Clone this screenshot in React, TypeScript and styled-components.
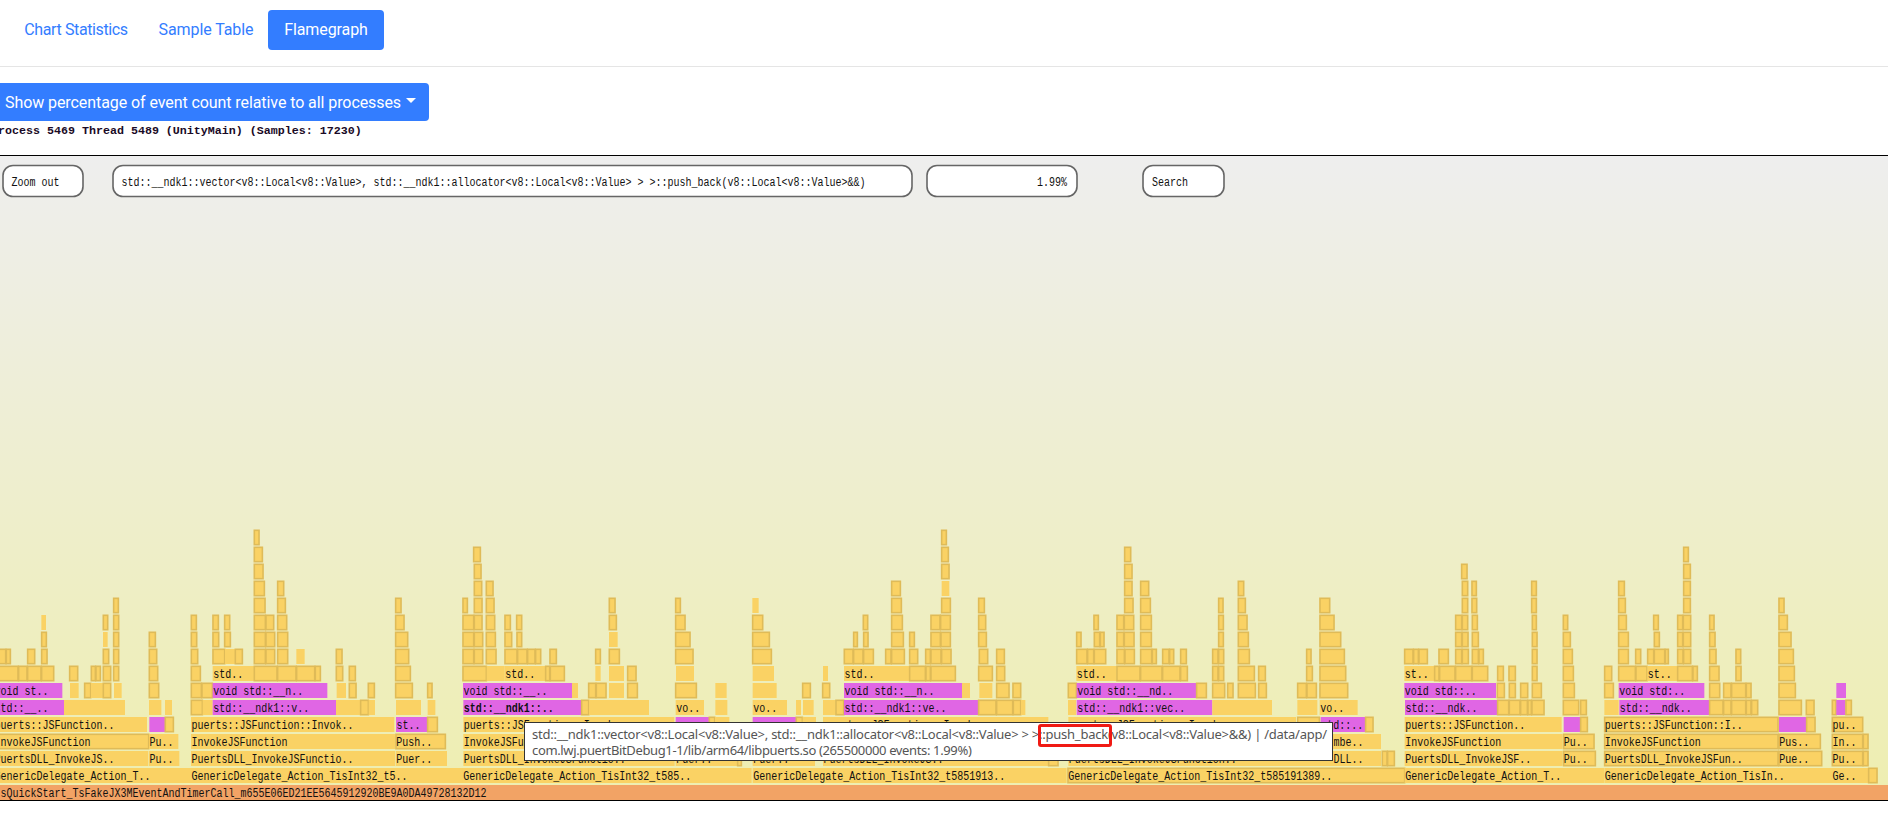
import React from "react";
import styled, { createGlobalStyle } from "styled-components";

const Global = createGlobalStyle`
  html, body { margin: 0; padding: 0; background: #fff; overflow: hidden; height: 815px; }
  body { font-family: "Roboto", "Noto Sans", sans-serif; font-size: 16px; color: #212529; }
  * { box-sizing: border-box; }
`;

const Page = styled.div`
  width: 1888px;
  height: 815px;
  overflow: hidden;
`;

const Header = styled.header`
  height: 67px;
  padding: 10px 8px 0;
  border-bottom: 1px solid #e5e5e5;
`;

const Nav = styled.nav`
  display: flex;
`;

const Tab = styled.a<{ $active?: boolean; $width: number; $tracking: number }>`
  display: block;
  width: ${(p) => p.$width}px;
  height: 40px;
  line-height: 40px;
  text-align: center;
  font-size: 16px;
  letter-spacing: ${(p) => p.$tracking}px;
  border-radius: 4px;
  white-space: nowrap;
  color: ${(p) => (p.$active ? "#fff" : "#337dff")};
  background: ${(p) => (p.$active ? "#337dff" : "transparent")};
`;

const Body = styled.section`
  height: 88px;
  padding-top: 16px;
`;

const Dropdown = styled.button`
  display: flex;
  align-items: center;
  height: 38px;
  width: 436px;
  margin-left: -7px;
  padding: 0 12px;
  border: 0;
  border-radius: 4px;
  background: #337dff;
  color: #fff;
  font: inherit;
  letter-spacing: -0.08px;
  white-space: nowrap;
  &::after {
    content: "";
    margin-left: 5px;
    margin-top: -3px;
    border-top: 5px solid #fff;
    border-left: 5px solid transparent;
    border-right: 5px solid transparent;
  }
`;

const ProcessLine = styled.div`
  margin: 2px 0 0 -9px;
  font: bold 11.67px/16px "Liberation Mono", monospace;
  color: #1a0a26;
  white-space: pre;
`;

const ChartFrame = styled.div`
  position: relative;
  height: 646px;
  border-top: 1px solid #000;
  border-bottom: 1px solid #000;
  background: linear-gradient(#eeeeee, #eeeeb0);
`;

const ChartSvg = styled.svg`
  display: block;
`;

const colors: Record<string, string> = {
  y: "#fad264",
  b: "#fad264",
  m: "#e066e4",
  M: "#e066e4",
  o: "#f2a365",
};

const Bar = styled.rect<{ $kind: string }>`
  fill: ${(p) => colors[p.$kind]};
  stroke: ${(p) => (p.$kind === "b" ? "#dfbb58" : "none")};
  stroke-width: 1.6;
`;

const Label = styled.text<{ $bold?: boolean }>`
  font-family: "Liberation Mono", monospace;
  font-size: 12px;
  font-weight: ${(p) => (p.$bold ? 700 : 400)};
  fill: #111;
`;

const Control = styled.rect`
  fill: #fff;
  stroke: #666;
  stroke-width: 1.6;
`;

const Tooltip = styled.div`
  position: absolute;
  left: 524px;
  top: 566px;
  width: 809px;
  height: 39px;
  padding: 3px 7px;
  background: #fff;
  border: 1px solid #333;
  font: 13px/16px "Noto Sans", sans-serif;
  color: #555;
  white-space: nowrap;
`;

const TipLine = styled.div<{ $tracking: number }>`
  letter-spacing: ${(p) => p.$tracking}px;
`;

const Highlight = styled.div`
  position: absolute;
  left: 1038px;
  top: 568px;
  width: 74px;
  height: 23px;
  border: 3px solid #f01a14;
  border-radius: 3px;
`;

type R = [number, number, number, string, string?];

const block = (off: number, list: R[]): R[] =>
  list.map(([r, a, b, k, t]) => [r, off + a / 3, off + b / 3, k, t]);

const bars: R[] = [
  [0, 0, 1888, "o", "sQuickStart_TsFakeJX3MEventAndTimerCall_m655E06ED21EE5645912920BE9A0DA49728132D12"],
  ...block(0, [
    [15, 762, 778, "b"],
    [14, 762, 788, "b"],
    [13, 762, 790, "b"],
    [12, 762, 794, "b"], [12, 832, 852, "b"],
    [11, 340, 356, "b"], [11, 762, 796, "b"], [11, 832, 857, "b"], [11, 1186, 1204, "b"],
    [10, 124, 138, "y"], [10, 309, 324, "b"], [10, 340, 357, "b"], [10, 573, 590, "b"], [10, 638, 656, "b"], [10, 673, 690, "b"], [10, 762, 797, "b"], [10, 797, 822, "b"], [10, 832, 861, "b"], [10, 1186, 1213, "b"],
    [9, 124, 140, "b"], [9, 309, 323, "y"], [9, 340, 357, "b"], [9, 447, 467, "b"], [9, 573, 591, "b"], [9, 638, 657, "b"], [9, 673, 692, "b"], [9, 762, 797, "b"], [9, 797, 825, "b"], [9, 832, 864, "b"], [9, 1186, 1224, "b"],
    [8, -6, 18, "b"], [8, 18, 32, "b"], [8, 82, 105, "b"], [8, 124, 142, "b"], [8, 309, 327, "b"], [8, 340, 357, "b"], [8, 447, 471, "b"], [8, 573, 594, "b"], [8, 638, 675, "b"], [8, 675, 705, "y"], [8, 705, 728, "b"], [8, 762, 797, "b"], [8, 797, 825, "b"], [8, 832, 864, "b"], [8, 889, 914, "y"], [8, 1008, 1027, "b"], [8, 1186, 1227, "b"],
    [7, -6, 55, "b"], [7, 55, 82, "b"], [7, 82, 124, "b"], [7, 124, 162, "b"], [7, 208, 234, "b"], [7, 273, 287, "b"], [7, 287, 302, "b"], [7, 309, 333, "b"], [7, 340, 357, "b"], [7, 447, 474, "b"], [7, 573, 602, "b"], [7, 638, 762, "y", "std.."], [7, 762, 832, "b"], [7, 832, 889, "b"], [7, 889, 945, "b"], [7, 945, 962, "b"], [7, 1008, 1029, "b"], [7, 1047, 1067, "b"], [7, 1186, 1232, "b"],
    [6, -18, 187, "m", "void st.."], [6, 210, 236, "y"], [6, 253, 273, "b"], [6, 273, 309, "y"], [6, 309, 333, "b"], [6, 342, 365, "y"], [6, 447, 477, "b"], [6, 573, 605, "b"], [6, 605, 638, "b"], [6, 638, 982, "m", "void std::__n.."], [6, 1010, 1038, "y"], [6, 1047, 1069, "b"], [6, 1104, 1124, "b"], [6, 1186, 1238, "b"], [6, 1282, 1297, "b"],
    [5, -18, 192, "m", "std::__.."], [5, 192, 375, "y"], [5, 447, 484, "y"], [5, 495, 516, "y"], [5, 573, 608, "b"], [5, 608, 638, "y"], [5, 638, 1008, "m", "std::__ndk1::v.."], [5, 1008, 1081, "y"], [5, 1081, 1106, "b"], [5, 1106, 1125, "y"], [5, 1188, 1263, "y"], [5, 1283, 1306, "y"],
    [4, -18, 441, "y", "puerts::JSFunction.."], [4, 448, 495, "m"], [4, 495, 521, "b"], [4, 573, 1183, "y", "puerts::JSFunction::Invok.."], [4, 1188, 1282, "m", "st.."], [4, 1282, 1313, "b"],
    [3, -18, 447, "b", "InvokeJSFunction"], [3, 447, 535, "y", "Pu.."], [3, 573, 1185, "y", "InvokeJSFunction"], [3, 1187, 1337, "b", "Push.."],
    [2, -18, 445, "y", "PuertsDLL_InvokeJS.."], [2, 447, 538, "y", "Pu.."], [2, 573, 1185, "y", "PuertsDLL_InvokeJSFunctio.."], [2, 1187, 1341, "y", "Puer.."],
    [1, -18, 1388, "y", "GenericDelegate_Action_T.."],
  ]),
  [1, 191, 463, "y", "GenericDelegate_Action_TisInt32_t5.."],
  ...block(440, [
    [14, 100, 122, "b"],
    [13, 102, 124, "b"],
    [12, 102, 126, "b"], [12, 138, 160, "b"], [12, 1354, 1382, "b"],
    [11, 68, 83, "b"], [11, 102, 127, "b"], [11, 138, 163, "b"], [11, 507, 526, "b"], [11, 706, 722, "b"], [11, 937, 956, "y"], [11, 1354, 1385, "b"],
    [10, 68, 102, "b"], [10, 102, 127, "b"], [10, 138, 165, "b"], [10, 194, 212, "b"], [10, 229, 246, "b"], [10, 507, 530, "b"], [10, 706, 736, "b"], [10, 937, 969, "b"], [10, 1269, 1284, "b"], [10, 1354, 1388, "b"],
    [9, 68, 102, "b"], [9, 102, 129, "b"], [9, 138, 167, "b"], [9, 194, 216, "b"], [9, 230, 246, "b"], [9, 507, 533, "y"], [9, 706, 751, "b"], [9, 937, 989, "b"], [9, 1240, 1253, "b"], [9, 1270, 1285, "b"], [9, 1354, 1391, "b"],
    [8, 68, 102, "b"], [8, 102, 129, "b"], [8, 138, 169, "b"], [8, 194, 232, "b"], [8, 232, 262, "b"], [8, 262, 286, "b"], [8, 286, 303, "b"], [8, 329, 350, "b"], [8, 466, 482, "b"], [8, 507, 539, "b"], [8, 706, 760, "b"], [8, 937, 995, "b"], [8, 1212, 1240, "b"], [8, 1240, 1270, "b"], [8, 1270, 1301, "b"], [8, 1336, 1354, "b"], [8, 1354, 1394, "b"],
    [7, 68, 140, "b"], [7, 140, 194, "y"], [7, 194, 316, "y", "std.."], [7, 316, 330, "b"], [7, 330, 374, "b"], [7, 466, 482, "y"], [7, 507, 552, "y"], [7, 562, 589, "b"], [7, 708, 762, "y"], [7, 938, 1002, "y"], [7, 1149, 1164, "y"], [7, 1212, 1408, "y", "std.."], [7, 1408, 1457, "b"],
    [6, 69, 396, "m", "void std::__.."], [6, 396, 414, "y"], [6, 445, 468, "b"], [6, 468, 499, "b"], [6, 507, 552, "y"], [6, 562, 593, "b"], [6, 706, 770, "b"], [6, 826, 860, "y"], [6, 938, 1010, "y"], [6, 1087, 1112, "b"], [6, 1147, 1170, "b"], [6, 1212, 1566, "m", "void std::__n.."],
    [5, 70, 424, "M", "std::__ndk1::.."], [5, 424, 447, "b"], [5, 447, 627, "y"], [5, 707, 792, "y", "vo.."], [5, 826, 862, "y"], [5, 938, 1041, "y", "vo.."], [5, 1068, 1083, "y"], [5, 1089, 1121, "y"], [5, 1149, 1187, "y"], [5, 1187, 1212, "b"], [5, 1212, 1614, "m", "std::__ndk1::ve.."],
    [4, 70, 703, "y", "puerts::JSFunction::Invok.."], [4, 707, 807, "m"], [4, 807, 825, "b"], [4, 825, 868, "y"], [4, 938, 1068, "m"], [4, 1068, 1088, "b"], [4, 1088, 1128, "y"], [4, 1149, 1825, "y", "puerts::JSFunction::Invok.."],
    [3, 70, 704, "y", "InvokeJSFunction"], [3, 707, 892, "y", "Push.."], [3, 938, 1125, "y", "Pus.."], [3, 1149, 1825, "y", "InvokeJSFunction"],
    [2, 70, 704, "y", "PuertsDLL_InvokeJSFunctio.."], [2, 707, 892, "y", "Puer.."], [2, 892, 905, "b"], [2, 938, 1125, "y", "Puer.."], [2, 1149, 1825, "y", "PuertsDLL_InvokeJS.."],
    [1, 68, 935, "y", "GenericDelegate_Action_TisInt32_t585.."], [1, 938, 1880, "y", "GenericDelegate_Action_TisInt32_t5851913.."],
  ]),
  ...block(900, [
    [15, 124, 140, "b"],
    [14, 124, 146, "b"], [14, 673, 693, "b"],
    [13, 124, 148, "b"], [13, 673, 697, "b"],
    [12, 125, 148, "y"], [12, 673, 697, "b"], [12, 721, 747, "b"], [12, 1014, 1032, "b"],
    [11, 124, 152, "b"], [11, 235, 254, "b"], [11, 673, 700, "b"], [11, 721, 752, "b"], [11, 955, 970, "b"], [11, 1014, 1037, "b"], [11, 1259, 1290, "b"],
    [10, 92, 121, "b"], [10, 121, 152, "b"], [10, 235, 258, "b"], [10, 581, 596, "b"], [10, 650, 672, "b"], [10, 672, 702, "b"], [10, 721, 755, "b"], [10, 955, 971, "b"], [10, 1014, 1042, "b"], [10, 1259, 1303, "b"],
    [9, 28, 44, "b"], [9, 92, 122, "b"], [9, 122, 152, "b"], [9, 235, 260, "b"], [9, 529, 544, "b"], [9, 582, 600, "b"], [9, 600, 613, "b"], [9, 650, 672, "b"], [9, 672, 703, "b"], [9, 721, 755, "b"], [9, 955, 971, "b"], [9, 1014, 1046, "b"], [9, 1259, 1323, "b"],
    [8, 28, 54, "b"], [8, 76, 92, "b"], [8, 92, 124, "b"], [8, 124, 154, "b"], [8, 237, 264, "b"], [8, 289, 314, "b"], [8, 529, 562, "b"], [8, 562, 582, "b"], [8, 582, 618, "b"], [8, 650, 674, "b"], [8, 674, 704, "b"], [8, 721, 756, "b"], [8, 756, 770, "b"], [8, 787, 808, "b"], [8, 808, 822, "b"], [8, 841, 860, "b"], [8, 937, 955, "b"], [8, 955, 972, "b"], [8, 1014, 1049, "b"], [8, 1219, 1234, "b"], [8, 1259, 1334, "b"],
    [7, 77, 92, "b"], [7, 92, 167, "b"], [7, 235, 278, "b"], [7, 289, 315, "b"], [7, 529, 650, "y", "std.."], [7, 650, 721, "b"], [7, 721, 787, "b"], [7, 787, 841, "b"], [7, 841, 863, "b"], [7, 937, 955, "b"], [7, 955, 972, "b"], [7, 1014, 1064, "b"], [7, 1075, 1097, "b"], [7, 1219, 1238, "b"], [7, 1259, 1338, "b"],
    [6, 186, 210, "y"], [6, 238, 277, "y"], [6, 289, 328, "b"], [6, 338, 363, "b"], [6, 504, 530, "b"], [6, 530, 889, "m", "void std::__nd.."], [6, 889, 920, "b"], [6, 937, 975, "b"], [6, 982, 1000, "b"], [6, 1014, 1067, "b"], [6, 1075, 1100, "b"], [6, 1192, 1220, "b"], [6, 1220, 1250, "b"], [6, 1259, 1344, "b"],
    [5, 235, 289, "b"], [5, 289, 339, "b"], [5, 339, 363, "b"], [5, 363, 376, "y"], [5, 504, 528, "y"], [5, 530, 937, "m", "std::__ndk1::vec.."], [5, 937, 1116, "y"], [5, 1192, 1252, "y"], [5, 1259, 1373, "y", "vo.."],
    [4, 505, 1188, "y", "puerts::JSFunction::Invok.."], [4, 1192, 1259, "b"], [4, 1262, 1396, "m", "std::.."], [4, 1396, 1420, "b"],
    [3, 445, 475, "b"], [3, 505, 1299, "y", "InvokeJSFunction"], [3, 1299, 1443, "y", "mbe.."],
    [2, 445, 475, "b"], [2, 505, 1299, "y", "PuertsDLL_InvokeJSFunction.."], [2, 1299, 1443, "y", "DLL.."],
    [1, 503, 1515, "b", "GenericDelegate_Action_TisInt32_t585191389.."],
  ]),
  ...block(1380, [
    [14, 910, 926, "b"],
    [13, 244, 262, "b"], [13, 910, 932, "b"],
    [12, 246, 264, "b"], [12, 275, 290, "b"], [12, 454, 470, "b"], [12, 715, 734, "b"], [12, 910, 932, "b"],
    [11, 246, 264, "b"], [11, 275, 291, "b"], [11, 454, 470, "b"], [11, 715, 737, "b"], [11, 910, 932, "b"], [11, 1196, 1213, "b"],
    [10, 226, 246, "b"], [10, 246, 264, "b"], [10, 276, 293, "b"], [10, 456, 470, "b"], [10, 549, 564, "b"], [10, 715, 740, "b"], [10, 820, 836, "b"], [10, 892, 909, "b"], [10, 909, 933, "b"], [10, 988, 1003, "b"], [10, 1196, 1223, "b"],
    [9, 226, 246, "b"], [9, 246, 265, "b"], [9, 276, 296, "b"], [9, 456, 472, "b"], [9, 549, 572, "b"], [9, 715, 746, "b"], [9, 822, 839, "b"], [9, 892, 909, "b"], [9, 909, 933, "b"], [9, 988, 1006, "b"], [9, 1196, 1234, "b"],
    [8, 73, 100, "b"], [8, 100, 116, "b"], [8, 116, 143, "b"], [8, 176, 206, "b"], [8, 226, 246, "b"], [8, 246, 266, "b"], [8, 276, 296, "b"], [8, 296, 311, "b"], [8, 456, 472, "b"], [8, 549, 578, "b"], [8, 715, 746, "b"], [8, 766, 783, "b"], [8, 802, 822, "b"], [8, 822, 855, "b"], [8, 855, 866, "b"], [8, 892, 910, "b"], [8, 910, 933, "b"], [8, 988, 1009, "b"], [8, 1067, 1083, "b"], [8, 1196, 1241, "b"],
    [7, 73, 163, "y", "st.."], [7, 163, 178, "b"], [7, 178, 226, "b"], [7, 226, 276, "b"], [7, 276, 324, "b"], [7, 352, 371, "b"], [7, 386, 407, "b"], [7, 456, 472, "b"], [7, 549, 581, "b"], [7, 673, 696, "b"], [7, 715, 767, "b"], [7, 767, 802, "b"], [7, 802, 892, "y", "st.."], [7, 892, 938, "b"], [7, 938, 953, "b"], [7, 988, 1018, "b"], [7, 1067, 1084, "b"], [7, 1196, 1244, "b"],
    [6, 73, 348, "m", "void std::.."], [6, 351, 374, "b"], [6, 387, 407, "b"], [6, 421, 444, "b"], [6, 456, 485, "b"], [6, 549, 584, "b"], [6, 673, 701, "b"], [6, 716, 973, "m", "void std:.."], [6, 988, 1020, "b"], [6, 1030, 1054, "b"], [6, 1054, 1098, "b"], [6, 1098, 1114, "b"], [6, 1196, 1247, "b"], [6, 1369, 1398, "m"],
    [5, 75, 352, "m", "std::__ndk.."], [5, 352, 387, "b"], [5, 387, 421, "b"], [5, 421, 443, "b"], [5, 443, 455, "b"], [5, 455, 493, "b"], [5, 549, 597, "b"], [5, 601, 620, "b"], [5, 673, 716, "y"], [5, 718, 988, "m", "std::__ndk.."], [5, 988, 1030, "b"], [5, 1030, 1054, "b"], [5, 1054, 1098, "b"], [5, 1098, 1114, "b"], [5, 1114, 1134, "b"], [5, 1196, 1265, "b"], [5, 1278, 1303, "b"], [5, 1356, 1369, "b"], [5, 1369, 1397, "m"], [5, 1397, 1415, "b"],
    [4, 74, 545, "y", "puerts::JSFunction.."], [4, 551, 601, "m"], [4, 601, 623, "b"], [4, 673, 1195, "b", "puerts::JSFunction::I.."], [4, 1197, 1279, "m"], [4, 1279, 1306, "b"], [4, 1356, 1449, "b", "pu.."],
    [3, 74, 548, "y", "InvokeJSFunction"], [3, 550, 643, "b", "Pu.."], [3, 673, 1195, "b", "InvokeJSFunction"], [3, 1196, 1322, "b", "Pus.."], [3, 1356, 1449, "b", "In.."], [3, 1449, 1465, "b"],
    [2, 6, 22, "b"], [2, 22, 44, "b"], [2, 74, 548, "y", "PuertsDLL_InvokeJSF.."], [2, 550, 647, "b", "Pu.."], [2, 673, 1195, "b", "PuertsDLL_InvokeJSFun.."], [2, 1196, 1326, "b", "Pue.."], [2, 1356, 1449, "b", "Pu.."], [2, 1449, 1465, "b"],
    [1, 74, 672, "y", "GenericDelegate_Action_T.."], [1, 673, 1356, "y", "GenericDelegate_Action_TisIn.."], [1, 1356, 1465, "y", "Ge.."], [1, 1465, 1492, "b"],
  ]),
];

const controls = [
  { x: 3, w: 80, label: "Zoom out", tx: 11.5 },
  { x: 113, w: 799, label: "std::__ndk1::vector<v8::Local<v8::Value>, std::__ndk1::allocator<v8::Local<v8::Value> > >::push_back(v8::Local<v8::Value>&&)", tx: 121.5 },
  { x: 927, w: 150, label: "1.99%", tx: 1037 },
  { x: 1143, w: 81, label: "Search", tx: 1152 },
];

const FlameBar = ({ bar }: { bar: R }) => {
  const [r, x0, x1, kind, text] = bar;
  const y = 785 - 17 * r;
  const inset = kind === "b" ? 0.3 : 0;
  return (
    <g>
      <Bar
        $kind={kind}
        x={x0 + inset}
        y={y + inset}
        width={Math.max(x1 - x0 - inset * 2, 1)}
        height={15 - inset * 2}
      />
      {text ? (
        <Label
          $bold={kind === "M"}
          x={x0 + 0.5}
          y={y + 12}
          textLength={text.length * 6}
          lengthAdjust="spacingAndGlyphs"
        >
          {text}
        </Label>
      ) : null}
    </g>
  );
};

export default function App() {
  return (
    <Page>
      <Global />
      <Header>
        <Nav>
          <Tab $width={136} $tracking={-0.38}>Chart Statistics</Tab>
          <Tab $width={124} $tracking={-0.1}>Sample Table</Tab>
          <Tab $width={116} $tracking={-0.1} $active>Flamegraph</Tab>
        </Nav>
      </Header>
      <Body>
        <Dropdown>Show percentage of event count relative to all processes</Dropdown>
        <ProcessLine>Process 5469 Thread 5489 (UnityMain) (Samples: 17230)</ProcessLine>
      </Body>
      <ChartFrame>
        <ChartSvg width={1888} height={644} viewBox="0 156 1888 644">
          {controls.map((c) => (
            <g key={c.label}>
              <Control x={c.x} y={165.5} width={c.w} height={31} rx={10} ry={10} />
              <Label x={c.tx} y={186} textLength={c.label.length * 6} lengthAdjust="spacingAndGlyphs">
                {c.label}
              </Label>
            </g>
          ))}
          {bars.map((b, i) => (
            <FlameBar key={i} bar={b} />
          ))}
        </ChartSvg>
        <Tooltip>
          <TipLine $tracking={-0.24}>
            std::__ndk1::vector&lt;v8::Local&lt;v8::Value&gt;, std::__ndk1::allocator&lt;v8::Local&lt;v8::Value&gt; &gt; &gt;::push_back(v8::Local&lt;v8::Value&gt;&amp;&amp;) | /data/app/
          </TipLine>
          <TipLine $tracking={-0.36}>
            com.lwj.puertBitDebug1-1/lib/arm64/libpuerts.so (265500000 events: 1.99%)
          </TipLine>
        </Tooltip>
        <Highlight />
      </ChartFrame>
    </Page>
  );
}
